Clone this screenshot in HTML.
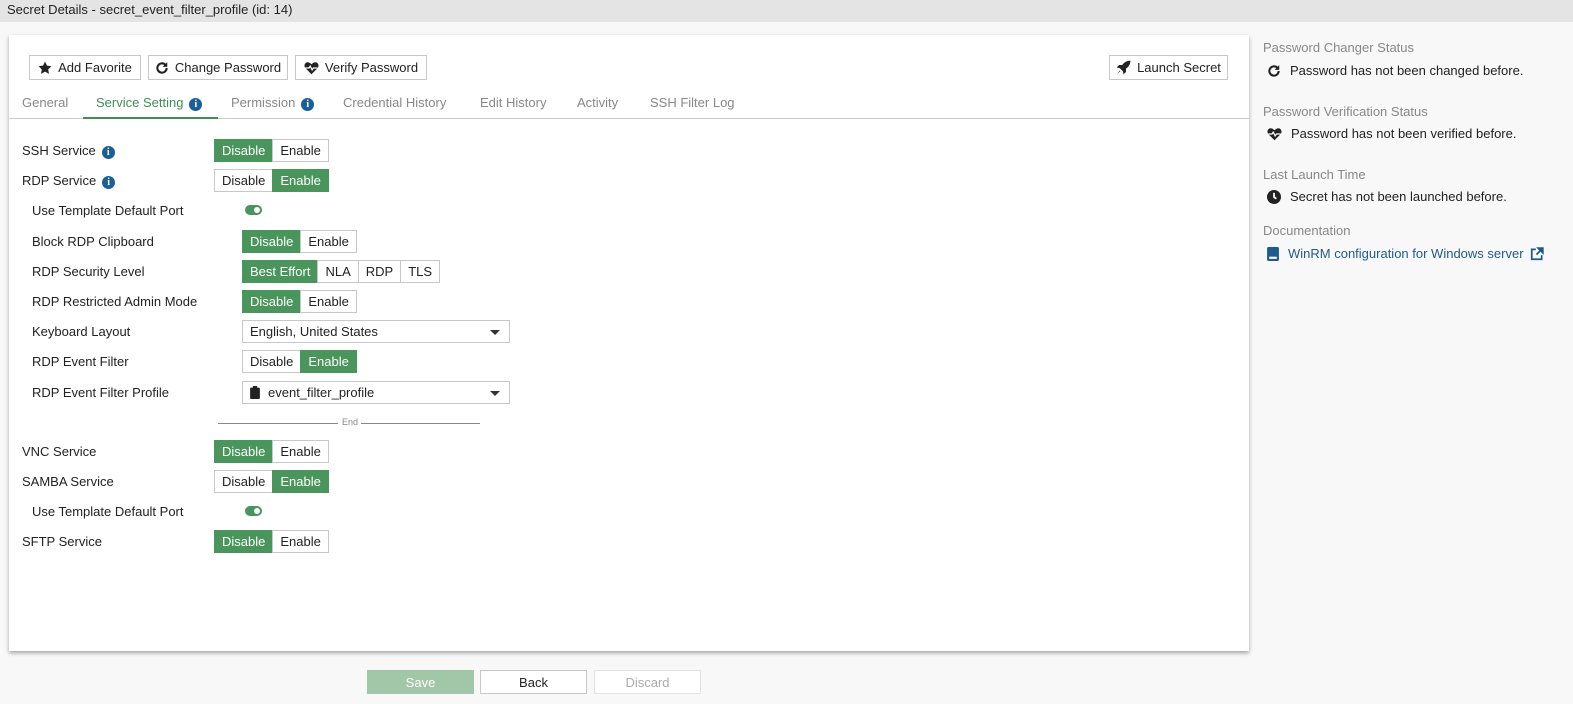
<!DOCTYPE html>
<html><head><meta charset="utf-8"><style>
*{box-sizing:border-box;margin:0;padding:0}
body{width:1573px;height:704px;background:#f8f8f8;font-family:"Liberation Sans",sans-serif;font-size:13px;color:#222;position:relative;overflow:hidden}
.a{position:absolute}
.top{left:0;top:0;width:1573px;height:22px;background:#e4e4e4;padding:2px 7px;font-size:13px;color:#222}
.card{left:9px;top:35px;width:1240px;height:616px;background:#fff;box-shadow:0 2px 4px rgba(0,0,0,.35)}
.btn{position:absolute;height:25px;border:1px solid #c8c8c8;background:#fff;display:flex;align-items:center;justify-content:center;gap:6px;font-size:13px;color:#222}
.tab{position:absolute;top:95px;color:#888;font-size:13px}
.lbl{position:absolute;font-size:13px;color:#222;line-height:16px}
.grp{position:absolute;display:flex;height:23px}
.grp span{border:1px solid #c8c8c8;padding:0 7px;display:flex;align-items:center;background:#fff;color:#222;margin-left:-1px}
.grp span:first-child{margin-left:0}
.grp span.on{background:#4a955b;border-color:#4a955b;color:#fff}
.info{display:inline-block;width:13px;height:13px;border-radius:50%;background:#1b5f99;color:#fff;font-size:10px;font-weight:bold;text-align:center;line-height:13px;vertical-align:0;margin-left:6px;font-family:"Liberation Serif",serif}
.tog{position:absolute;width:17px;height:10px;border-radius:5px;background:#4a955b}
.tog:after{content:"";position:absolute;right:2px;top:2px;width:6px;height:6px;border-radius:50%;background:#fff}
.sel{position:absolute;left:242px;width:268px;height:23px;border:1px solid #c8c8c8;background:#fff;padding:0 7px;display:flex;align-items:center;gap:8px}
.sel:after{content:"";position:absolute;right:9px;top:9px;border-left:5px solid transparent;border-right:5px solid transparent;border-top:5px solid #333}
.rh{position:absolute;left:1263px;color:#888;font-size:13px}
.ri{position:absolute;left:1267px;font-size:13px;color:#222;display:flex;align-items:center;gap:9px}
.fb{position:absolute;top:670px;width:107px;height:24px;display:flex;align-items:center;justify-content:center;font-size:13px}
</style></head><body>
<div class="a top">Secret Details - secret_event_filter_profile (id: 14)</div>
<div class="a card"></div>

<div class="btn" style="left:29px;top:55px;width:112px"><svg width="14" height="14" viewBox="0 0 24 24"><path d="M12 1l3.4 7 7.6 1-5.5 5.3 1.3 7.7L12 18.3 5.2 22l1.3-7.7L1 9l7.6-1z" fill="#222"/></svg>Add Favorite</div>
<div class="btn" style="left:148px;top:55px;width:140px"><svg width="14" height="14" viewBox="0 0 24 24"><path d="M20 12a8 8 0 1 1-2.4-5.7" fill="none" stroke="#222" stroke-width="3.5"/><path d="M21 2v8h-8z" fill="#222"/></svg>Change Password</div>
<div class="btn" style="left:295px;top:55px;width:132px"><svg width="15" height="14" viewBox="0 0 24 22"><path d="M12 21L2 11C-1 7 2 1 7 2c2 0 4 2 5 3 1-1 3-3 5-3 5-1 8 5 5 9z" fill="#222"/><path d="M2 11h6l2-3 3 6 2-3h7" stroke="#fff" stroke-width="2" fill="none"/></svg>Verify Password</div>
<div class="btn" style="left:1109px;top:55px;width:119px"><svg width="15" height="15" viewBox="0 0 24 24"><path d="M23 1c-6 0-10 3-13 7H5l-4 4 5 1 5 5 1 5 4-4v-5c4-3 7-7 7-13z" fill="#222"/><path d="M6 17l-4 5 5-4z" fill="#222"/></svg>Launch Secret</div>

<div class="tab" style="left:22px">General</div>
<div class="tab" style="left:96px;color:#3f8f55">Service Setting<span class="info">i</span></div>
<div class="tab" style="left:231px">Permission<span class="info">i</span></div>
<div class="tab" style="left:343px">Credential History</div>
<div class="tab" style="left:480px">Edit History</div>
<div class="tab" style="left:577px">Activity</div>
<div class="tab" style="left:650px">SSH Filter Log</div>
<div class="a" style="left:9px;top:118px;width:1240px;height:1px;background:#ccc"></div>
<div class="a" style="left:83px;top:117px;width:135px;height:2px;background:#3f8f55"></div>

<div class="lbl" style="left:22px;top:143px">SSH Service<span class="info">i</span></div>
<div class="grp" style="left:214px;top:139px"><span class="on">Disable</span><span>Enable</span></div>
<div class="lbl" style="left:22px;top:173px">RDP Service<span class="info">i</span></div>
<div class="grp" style="left:214px;top:169px"><span>Disable</span><span class="on">Enable</span></div>
<div class="lbl" style="left:32px;top:203px">Use Template Default Port</div>
<div class="tog" style="left:245px;top:205px"></div>
<div class="lbl" style="left:32px;top:234px">Block RDP Clipboard</div>
<div class="grp" style="left:242px;top:230px"><span class="on">Disable</span><span>Enable</span></div>
<div class="lbl" style="left:32px;top:264px">RDP Security Level</div>
<div class="grp" style="left:242px;top:260px"><span class="on">Best Effort</span><span>NLA</span><span>RDP</span><span>TLS</span></div>
<div class="lbl" style="left:32px;top:294px">RDP Restricted Admin Mode</div>
<div class="grp" style="left:242px;top:290px"><span class="on">Disable</span><span>Enable</span></div>
<div class="lbl" style="left:32px;top:324px">Keyboard Layout</div>
<div class="sel" style="top:320px">English, United States</div>
<div class="lbl" style="left:32px;top:354px">RDP Event Filter</div>
<div class="grp" style="left:242px;top:350px"><span>Disable</span><span class="on">Enable</span></div>
<div class="lbl" style="left:32px;top:385px">RDP Event Filter Profile</div>
<div class="sel" style="top:381px"><svg width="10" height="13" viewBox="0 0 9 12"><rect x="0" y="1.5" width="9" height="10.5" rx="1" fill="#222"/><rect x="2.5" y="0" width="4" height="3" fill="#222"/></svg>event_filter_profile</div>
<div class="a" style="left:218px;top:423px;width:120px;height:1px;background:#888"></div>
<div class="a" style="left:342px;top:417px;font-size:9px;color:#888">End</div>
<div class="a" style="left:361px;top:423px;width:119px;height:1px;background:#888"></div>

<div class="lbl" style="left:22px;top:444px">VNC Service</div>
<div class="grp" style="left:214px;top:440px"><span class="on">Disable</span><span>Enable</span></div>
<div class="lbl" style="left:22px;top:474px">SAMBA Service</div>
<div class="grp" style="left:214px;top:470px"><span>Disable</span><span class="on">Enable</span></div>
<div class="lbl" style="left:32px;top:504px">Use Template Default Port</div>
<div class="tog" style="left:245px;top:506px"></div>
<div class="lbl" style="left:22px;top:534px">SFTP Service</div>
<div class="grp" style="left:214px;top:530px"><span class="on">Disable</span><span>Enable</span></div>

<div class="rh" style="top:40px">Password Changer Status</div>
<div class="ri" style="top:63px"><svg width="14" height="14" viewBox="0 0 24 24"><path d="M20 12a8 8 0 1 1-2.4-5.7" fill="none" stroke="#222" stroke-width="3.5"/><path d="M21 2v8h-8z" fill="#222"/></svg>Password has not been changed before.</div>
<div class="rh" style="top:104px">Password Verification Status</div>
<div class="ri" style="top:126px"><svg width="15" height="14" viewBox="0 0 24 22"><path d="M12 21L2 11C-1 7 2 1 7 2c2 0 4 2 5 3 1-1 3-3 5-3 5-1 8 5 5 9z" fill="#222"/><path d="M2 11h6l2-3 3 6 2-3h7" stroke="#fff" stroke-width="2" fill="none"/></svg>Password has not been verified before.</div>
<div class="rh" style="top:167px">Last Launch Time</div>
<div class="ri" style="top:189px"><svg width="14" height="14" viewBox="0 0 24 24"><circle cx="12" cy="12" r="12" fill="#222"/><path d="M12 5v7l4 3" stroke="#fff" stroke-width="3" fill="none"/></svg>Secret has not been launched before.</div>
<div class="rh" style="top:223px">Documentation</div>
<div class="ri" style="top:246px;color:#1f5a8e"><svg width="12" height="14" viewBox="0 0 11 13"><rect width="11" height="13" rx="1.5" fill="#1f5a8e"/><rect x="2" y="9" width="7" height="2" fill="#fff"/></svg>WinRM configuration for Windows server<svg width="14" height="14" viewBox="0 0 24 24" style="margin-left:-3px"><path d="M10 4H3v17h17v-7" fill="none" stroke="#1f5a8e" stroke-width="3"/><path d="M14 2h8v8zM22 2L11 13" stroke="#1f5a8e" stroke-width="3" fill="#1f5a8e"/></svg></div>

<div class="fb" style="left:367px;background:#a1c6a8;color:#fff">Save</div>
<div class="fb" style="left:480px;background:#fff;border:1px solid #c8c8c8;color:#222">Back</div>
<div class="fb" style="left:594px;background:#fff;border:1px solid #e2e2e2;color:#aaa">Discard</div>
</body></html>
